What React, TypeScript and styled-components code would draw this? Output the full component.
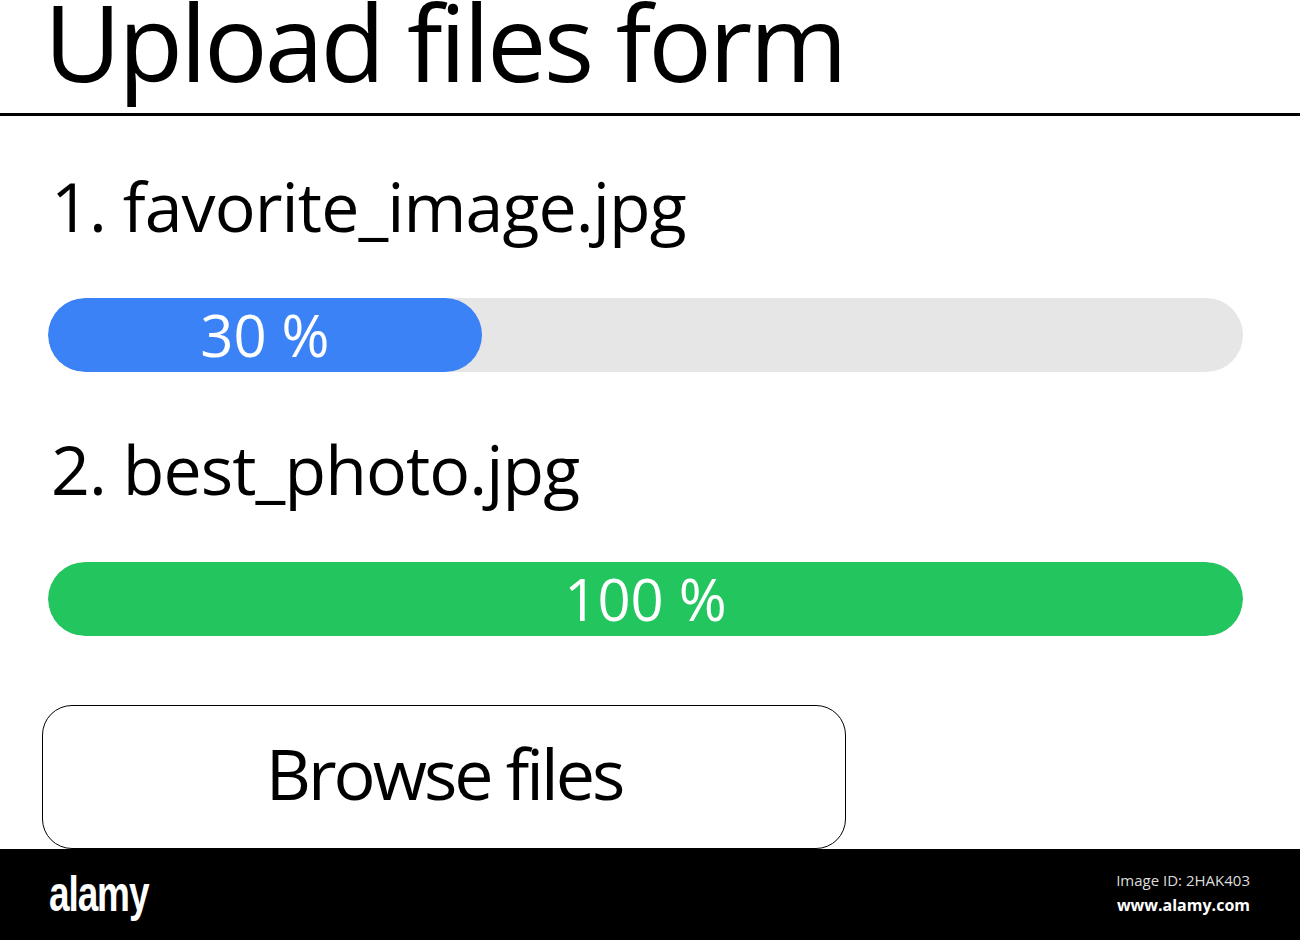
import styled, { createGlobalStyle } from "styled-components";

const GlobalStyle = createGlobalStyle`
  html, body {
    margin: 0;
    padding: 0;
    background: #fff;
  }
  body {
    font-family: "Open Sans", "Noto Sans", sans-serif;
    color: #000;
  }
`;

const Page = styled.div`
  width: 1300px;
  height: 940px;
  display: flex;
  flex-direction: column;
  overflow: hidden;
`;

const Header = styled.header`
  flex-shrink: 0;
  height: 116px;
  border-bottom: 3px solid #000;
  padding: 3px 0 0 44px;
  box-sizing: border-box;
`;

const Title = styled.h1`
  margin: 0;
  font-size: 106px;
  font-weight: 400;
  line-height: 77px;
  letter-spacing: -3px;
  white-space: nowrap;
`;

const Uploads = styled.section`
  flex: 1;
  display: flex;
  flex-direction: column;
  padding: 56px 57px 0 48px;
`;

const FileName = styled.div`
  font-size: 68px;
  line-height: 68px;
  letter-spacing: -0.9px;
  padding-left: 3px;
  white-space: nowrap;
`;

const Track = styled.div<{ $last?: boolean }>`
  margin: ${(p) => (p.$last ? 59 : 58)}px 0 ${(p) => (p.$last ? 69 : 63)}px;
  height: 74px;
  border-radius: 37px;
  background: #e6e6e6;
  overflow: hidden;
`;

const Fill = styled.div<{ $color: string }>`
  height: 100%;
  border-radius: 37px;
  background: ${(p) => p.$color};
  color: #fff;
  display: flex;
  align-items: center;
  justify-content: center;
  font-size: 58px;
  line-height: 1;
  white-space: nowrap;
`;

const BrowseButton = styled.button`
  width: 804px;
  height: 144px;
  margin-left: -6px;
  border: 1px solid #000;
  border-radius: 30px;
  background: #fff;
  color: #000;
  font-family: inherit;
  font-size: 70px;
  letter-spacing: -3px;
  padding: 0 0 8px;
  display: flex;
  align-items: center;
  justify-content: center;
  cursor: pointer;
`;

const Footer = styled.footer`
  height: 91px;
  flex-shrink: 0;
  background: #000;
  color: #fff;
  display: flex;
  align-items: center;
  justify-content: space-between;
  padding: 0 50px 0 49px;
`;

/* narrow bold wordmark */
const Logo = styled.div`
  font-family: "Liberation Sans", Arial, sans-serif;
  font-weight: 700;
  font-size: 50px;
  letter-spacing: -1.5px;
  line-height: 1;
  margin-top: -2px;
  transform: scaleX(0.74);
  transform-origin: left center;
`;

const Credit = styled.div`
  display: flex;
  flex-direction: column;
  align-items: flex-end;
  gap: 4px;
  margin-top: -4px;
`;

const CreditId = styled.span`
  font-size: 15px;
  color: #ddd;
`;

const CreditSite = styled.span`
  font-size: 16px;
  font-weight: 700;
`;

type Upload = { name: string; label: string; progress: number; color: string };

const uploads: Upload[] = [
  { name: "1. favorite_image.jpg", label: "30 %", progress: 36.3, color: "#3b82f6" },
  { name: "2. best_photo.jpg", label: "100 %", progress: 100, color: "#22c55e" },
];

export default function App() {
  return (
    <>
      <GlobalStyle />
      <Page>
        <Header>
          <Title>Upload files form</Title>
        </Header>
        <Uploads>
          {uploads.map((u, i) => (
            <div key={u.name}>
              <FileName>{u.name}</FileName>
              <Track $last={i === uploads.length - 1}>
                <Fill $color={u.color} style={{ width: `${u.progress}%` }}>
                  {u.label}
                </Fill>
              </Track>
            </div>
          ))}
          <BrowseButton>Browse files</BrowseButton>
        </Uploads>
        <Footer>
          <Logo>alamy</Logo>
          <Credit>
            <CreditId>Image ID: 2HAK403</CreditId>
            <CreditSite>www.alamy.com</CreditSite>
          </Credit>
        </Footer>
      </Page>
    </>
  );
}
